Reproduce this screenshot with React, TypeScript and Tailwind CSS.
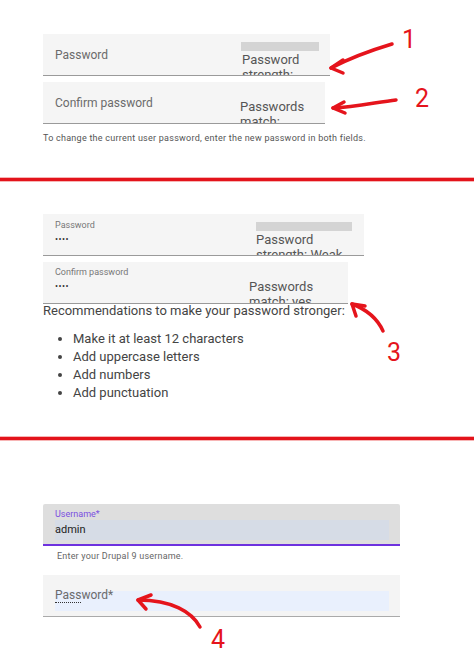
import React from "react";

const RED = "#e5141c";

function RedRule() {
  return (
    <div className="h-[5px] w-full bg-[#f7b5b5] flex items-center">
      <div className="h-[3px] w-full bg-[#e3131b]"></div>
    </div>
  );
}

function Annotations() {
  return (
    <svg
      className="absolute inset-0 pointer-events-none"
      width="474"
      height="670"
      viewBox="0 0 474 670"
      fill="none"
      stroke={RED}
      strokeWidth="3.5"
      strokeLinecap="round"
      strokeLinejoin="round"
    >
      <path d="M392 44 C 372 50, 350 58, 331 68" />
      <path d="M331 68 L 343 60 M331 68 L 343 73" />
      <path d="M396 100 C 378 102, 355 107, 333 108" />
      <path d="M333 108 L 344 102 M333 108 L 345 113" />
      <path d="M383 331 C 378 320, 368 310, 352 304" />
      <path d="M352 304 L 365 306 M352 304 L 356 316" />
      <path d="M200 627 C 192 612, 172 600, 138 600" />
      <path d="M138 600 L 151 595 M138 600 L 146 609" />
    </svg>
  );
}

function Num({ children, className }: { children: React.ReactNode; className: string }) {
  return (
    <span
      className={`absolute text-[25px] leading-none text-[#e5141c] ${className}`}
      style={{ fontFamily: "Roboto, sans-serif" }}
    >
      {children}
    </span>
  );
}

export default function App() {
  return (
    <div
      className="relative w-[474px] h-[670px] bg-white overflow-hidden text-[#555]"
      style={{ fontFamily: "Roboto, 'Noto Sans', sans-serif" }}
    >
      {/* Section 1 */}
      <div className="pt-[34px] pl-[43px]">
        <div className="w-[287px] h-[42px] bg-[#f5f5f5] border-b border-[#9a9a9a] flex overflow-hidden">
          <div className="w-[198px] shrink-0 pl-3 pt-[12px] text-[12px] text-[#6b6b6b]">Password</div>
          <div className="w-[78px] shrink-0 pt-[8px] flex flex-col">
            <div className="h-[9px] w-[78px] shrink-0 bg-[#d4d4d4]"></div>
            <div className="shrink-0 text-[13px] leading-[15px] text-[#555] pt-[1px] pl-[1px]">
              Password strength:
            </div>
          </div>
        </div>
        <div className="mt-[6px] w-[282px] h-[42px] bg-[#f5f5f5] border-b border-[#9a9a9a] flex overflow-hidden">
          <div className="w-[197px] shrink-0 pl-3 pt-[12px] text-[12px] text-[#6b6b6b]">Confirm password</div>
          <div className="w-[80px] shrink-0 pt-[17px] text-[13px] leading-[15px] text-[#555]">
            Passwords match:
          </div>
        </div>
        <p className="mt-[8px] text-[9px] leading-[12px] tracking-[0.25px] text-[#555]">
          To change the current user password, enter the new password in both fields.
        </p>
      </div>

      <div className="mt-[33px]">
        <RedRule />
      </div>

      {/* Section 2 */}
      <div className="pt-[32px] pl-[43px]">
        <div className="w-[321px] h-[42px] bg-[#f5f5f5] border-b border-[#9a9a9a] flex overflow-hidden">
          <div className="w-[213px] shrink-0 pl-3 pt-[6px] flex flex-col">
            <span className="text-[9px] leading-[11px] text-[#777]">Password</span>
            <span className="text-[9px] leading-[14px] text-[#333] tracking-[0.5px] pt-[1px]">••••</span>
          </div>
          <div className="w-[96px] shrink-0 pt-[8px] flex flex-col">
            <div className="h-[9px] w-[96px] shrink-0 bg-[#d4d4d4]"></div>
            <div className="shrink-0 text-[13px] leading-[15px] text-[#555] pt-[1px]">
              Password strength: Weak
            </div>
          </div>
        </div>
        <div className="mt-[6px] w-[305px] h-[42px] bg-[#f5f5f5] border-b border-[#9a9a9a] flex overflow-hidden">
          <div className="w-[206px] shrink-0 pl-3 pt-[5px] flex flex-col">
            <span className="text-[9px] leading-[11px] text-[#777]">Confirm password</span>
            <span className="text-[9px] leading-[14px] text-[#333] tracking-[0.5px] pt-[1px]">••••</span>
          </div>
          <div className="w-[90px] shrink-0 pt-[17px] text-[13px] leading-[15px] text-[#555]">
            Passwords match: yes
          </div>
        </div>
        <p className="-mt-[1px] text-[13px] leading-[15px] text-[#444]">
          Recommendations to make your password stronger:
        </p>
        <ul className="mt-[12px] pl-[30px] list-disc text-[13px] leading-[18px] text-[#444]">
          <li>Make it at least 12 characters</li>
          <li>Add uppercase letters</li>
          <li>Add numbers</li>
          <li>Add punctuation</li>
        </ul>
      </div>

      <div className="mt-[34px]">
        <RedRule />
      </div>

      {/* Section 3 */}
      <div className="pt-[63px] pl-[43px]">
        <div className="w-[357px] h-[42px] bg-[#dedede] border-b-2 border-[#6e32de] rounded-t-[2px] pt-[4px] pl-3 pr-[11px]">
          <div className="text-[9px] leading-[12px] text-[#7b4fe0]">Username*</div>
          <div className="h-[20px] bg-[#d6dce6] flex items-center text-[11px] text-[#222]">admin</div>
        </div>
        <p className="mt-[4px] pl-[14px] text-[9px] leading-[12px] tracking-[0.2px] text-[#666]">
          Enter your Drupal 9 username.
        </p>
        <div className="mt-[13px] w-[357px] h-[42px] bg-[#f4f4f4] border-b border-[#aaa] relative">
          <div className="absolute left-3 right-[11px] top-[16px] h-[20px] bg-[#e9f0fd]"></div>
          <div className="relative pl-3 pt-[12px] text-[12px] leading-[16px] text-[#6b6b6b]">
            <abbr className="no-underline border-b border-dotted border-[#333]">Pass</abbr>word*
          </div>
        </div>
      </div>

      <Annotations />
      <Num className="left-[402px] top-[27px]">1</Num>
      <Num className="left-[415px] top-[86px]">2</Num>
      <Num className="left-[387px] top-[340px]">3</Num>
      <Num className="left-[211px] top-[627px]">4</Num>
    </div>
  );
}
